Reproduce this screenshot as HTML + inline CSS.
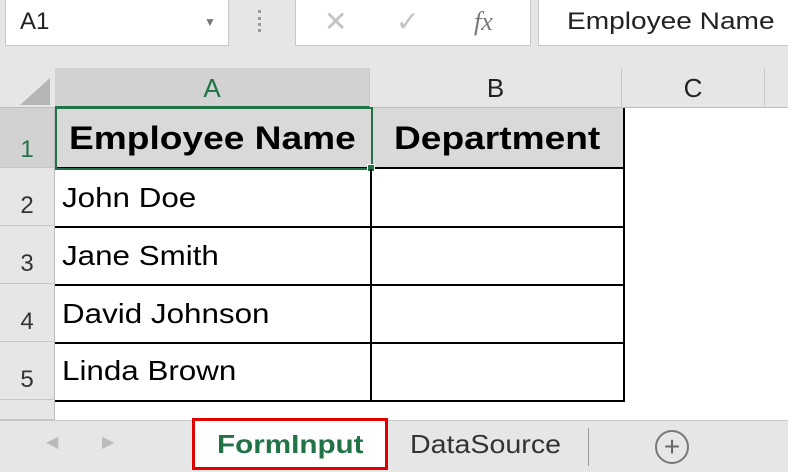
<!DOCTYPE html><html><head><style>
body{margin:0;width:788px;height:472px;overflow:hidden;background:#fff;font-family:"Liberation Sans",sans-serif;position:relative}
.a{position:absolute;box-sizing:border-box}
.s{display:inline-block;transform-origin:left center;white-space:nowrap}
.m{display:inline-block;transform-origin:center center;white-space:nowrap}
.ch{font-size:26px;color:#222;text-align:center;line-height:40px;top:68px;height:40px;border-right:1px solid #c8c8c8}
.rh{left:0;width:55px;font-size:24px;color:#333;text-align:center;background:#e6e6e6;border-bottom:1px solid #c8c8c8;border-right:1px solid #bdbdbd}
.c{font-size:28px;color:#000;padding-left:7px;border-right:2px solid #000;border-bottom:2px solid #000}
.c .s{transform:scaleX(1.12)}
</style></head><body>
<div class="a" style="left:0;top:0;width:788px;height:68px;background:#e6e6e6"></div>
<div class="a" style="left:5px;top:0;width:224px;height:46px;background:#fff;border:1px solid #c6c6c6;border-top:none;font-size:24px;line-height:44px;padding-left:14px;color:#222">A1<span style="position:absolute;left:198px;top:0;font-size:12px;color:#777">▼</span></div>
<div class="a" style="left:258px;top:10px;width:4px;height:22px;border-left:3px dotted #999"></div>
<div class="a" style="left:295px;top:0;width:236px;height:46px;background:#fff;border:1px solid #c6c6c6;border-top:none;color:#c2c2c2;font-size:28px;line-height:44px">
<span style="position:absolute;left:28px">✕</span><span style="position:absolute;left:100px">✓</span><span style="position:absolute;left:178px;font-family:'Liberation Serif',serif;font-style:italic;color:#777;font-size:26px">fx</span></div>
<div class="a" style="left:538px;top:0;width:260px;height:46px;background:#fff;border:1px solid #c6c6c6;border-top:none;font-size:24px;line-height:44px;padding-left:28px;color:#222"><span class="s" style="transform:scaleX(1.17)">Employee Name</span></div>
<div class="a" style="left:0;top:68px;width:788px;height:40px;background:#e6e6e6;border-bottom:1px solid #bdbdbd"></div>
<div class="a" style="left:20px;top:78px;width:0;height:0;border-left:30px solid transparent;border-bottom:27px solid #b5b5b5"></div>
<div class="a ch" style="left:55px;width:315px;background:#d2d2d2;color:#217346;border-bottom:2px solid #217346">A</div>
<div class="a ch" style="left:370px;width:252px">B</div>
<div class="a ch" style="left:622px;width:143px">C</div>
<div class="a rh" style="top:108px;height:60px;line-height:84px;background:#d2d2d2;color:#217346">1</div>
<div class="a rh" style="top:168px;height:58px;line-height:76px">2</div>
<div class="a rh" style="top:226px;height:58px;line-height:76px">3</div>
<div class="a rh" style="top:284px;height:58px;line-height:76px">4</div>
<div class="a rh" style="top:342px;height:58px;line-height:76px">5</div>
<div class="a rh" style="top:400px;height:20px"></div>
<div class="a c" style="left:55px;top:108px;width:317px;height:61px;background:#d9d9d9;font-weight:bold;font-size:32px;line-height:60px;padding-left:14px"><span class="s" style="transform:scaleX(1.16)">Employee Name</span></div>
<div class="a c" style="left:370px;top:108px;width:255px;height:61px;background:#d9d9d9;font-weight:bold;font-size:32px;line-height:60px;padding-left:24px"><span class="s" style="transform:scaleX(1.16)">Department</span></div>
<div class="a" style="left:55px;top:107px;width:318px;height:63px;border:2px solid #217346"></div>
<div class="a" style="left:367px;top:164px;width:8px;height:8px;background:#217346;border:1px solid #fff"></div>
<div class="a c" style="left:55px;top:169px;width:317px;height:59px;line-height:58px"><span class="s">John Doe</span></div>
<div class="a c" style="left:370px;top:169px;width:255px;height:59px"></div>
<div class="a c" style="left:55px;top:227px;width:317px;height:59px;line-height:58px"><span class="s">Jane Smith</span></div>
<div class="a c" style="left:370px;top:227px;width:255px;height:59px"></div>
<div class="a c" style="left:55px;top:285px;width:317px;height:59px;line-height:58px"><span class="s">David Johnson</span></div>
<div class="a c" style="left:370px;top:285px;width:255px;height:59px"></div>
<div class="a c" style="left:55px;top:343px;width:317px;height:59px;line-height:56px"><span class="s">Linda Brown</span></div>
<div class="a c" style="left:370px;top:343px;width:255px;height:59px"></div>
<div class="a" style="left:0;top:420px;width:788px;height:52px;background:#e6e6e6;border-top:1px solid #c6c6c6"></div>
<div class="a" style="left:46px;top:432px;color:#bbb;font-size:16px">◀</div>
<div class="a" style="left:102px;top:432px;color:#bbb;font-size:16px">▶</div>
<div class="a" style="left:192px;top:418px;width:196px;height:52px;background:#fff;border:3px solid #e00000;color:#217346;font-weight:bold;font-size:26px;text-align:center;line-height:46px"><span class="m" style="transform:scaleX(1.14)">FormInput</span></div>
<div class="a" style="left:410px;top:420px;font-size:26px;line-height:48px;color:#333"><span class="s" style="transform:scaleX(1.1)">DataSource</span></div>
<div class="a" style="left:588px;top:428px;width:1px;height:38px;background:#999"></div>
<div class="a" style="left:655px;top:430px;width:34px;height:34px;border:2px solid #777;border-radius:50%;text-align:center;line-height:30px;font-size:28px;color:#666">+</div>
</body></html>
